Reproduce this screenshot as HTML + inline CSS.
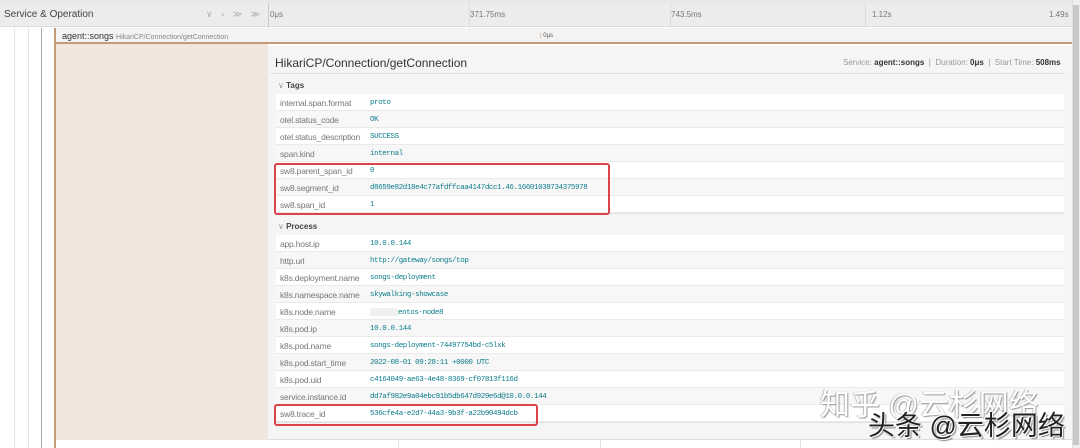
<!DOCTYPE html>
<html><head><meta charset="utf-8"><style>
*{margin:0;padding:0;box-sizing:border-box}
body{width:1080px;height:448px;overflow:hidden;background:#fff;font-family:"Liberation Sans",sans-serif;position:relative;color:#333}
.a{position:absolute}
.k{position:absolute;left:280px;font-size:8.5px;color:#777;letter-spacing:-0.2px}
.v{position:absolute;left:370px;font-family:"Liberation Mono",monospace;font-size:7.5px;letter-spacing:-0.4px;color:#0b7c8a}
.row{position:absolute;left:276px;width:788px;height:17px;border-bottom:1px solid #eaeaea}
</style></head><body>
<div class="a" style="left:0;top:0;width:1080px;height:3px;background:#e8e8e8"></div>
<div class="a" style="left:0;top:3px;width:1072px;height:24px;background:#ececec;border-bottom:1px solid #ddd"></div>
<div class="a" style="left:4px;top:9px;font-size:10px;color:#444">Service &amp; Operation</div>
<div class="a" style="left:206px;top:9px;font-size:9px;color:#aaa;letter-spacing:3px">∨ › ≫ ≫</div>
<div class="a" style="left:268px;top:3px;width:1px;height:41px;background:#ccc"></div>
<div class="a" style="left:270px;top:10px;font-size:8px;color:#777">0μs</div>
<div class="a" style="left:469px;top:3px;width:1px;height:41px;background:#ddd"></div>
<div class="a" style="left:470px;top:10px;font-size:8px;color:#777">371.75ms</div>
<div class="a" style="left:670px;top:3px;width:1px;height:41px;background:#ddd"></div>
<div class="a" style="left:671px;top:10px;font-size:8px;color:#777">743.5ms</div>
<div class="a" style="left:865px;top:3px;width:1px;height:41px;background:#ddd"></div>
<div class="a" style="left:872px;top:10px;font-size:8px;color:#777">1.12s</div>
<div class="a" style="left:1049px;top:10px;font-size:8px;color:#777">1.49s</div>
<div class="a" style="left:1072px;top:0;width:8px;height:448px;background:#f0f0f0;border-left:1px solid #ddd"></div>
<div class="a" style="left:1073px;top:5px;width:6px;height:440px;background:#c8c8c8"></div>
<div class="a" style="left:56px;top:28px;width:1016px;height:16px;background:#f3f3f3;border-bottom:2px solid #c49a77"></div>
<div class="a" style="left:62px;top:31px;font-size:9px;color:#333">agent::songs <span style="font-size:7px;color:#888">HikariCP/Connection/getConnection</span></div>
<div class="a" style="left:540px;top:33px;font-size:6px;color:#555"><span style="color:#c49a77">|</span> 0μs</div>
<div class="a" style="left:14px;top:28px;width:1px;height:420px;background:#e3e3e3"></div>
<div class="a" style="left:28px;top:28px;width:1px;height:420px;background:#e3e3e3"></div>
<div class="a" style="left:41px;top:28px;width:1px;height:420px;background:#aaa"></div>
<div class="a" style="left:54px;top:28px;width:2px;height:420px;background:#c49a77"></div>
<div class="a" style="left:56px;top:44px;width:212px;height:396px;background:#f0e6de"></div>
<div class="a" style="left:268px;top:46px;width:804px;height:394px;background:#f5f5f5;border-bottom:1px solid #ddd"></div>
<div class="a" style="left:275px;top:56px;font-size:12px;color:#333">HikariCP/Connection/getConnection</div>
<div class="a" style="left:843px;top:58px;font-size:8px;color:#999">Service: <b style="color:#333">agent::songs</b> &nbsp;|&nbsp; Duration: <b style="color:#333">0μs</b> &nbsp;|&nbsp; Start Time: <b style="color:#333">508ms</b></div>
<div class="a" style="left:270px;top:73px;width:795px;height:1px;background:#e2e2e2"></div>
<div class="a" style="left:278px;top:81px;font-size:8px;color:#444"><span style="color:#999">∨</span> <b>Tags</b></div>
<div class="a" style="left:276px;top:94px;width:788px;height:120px;background:#fff;border:1px solid #e2e2e2"></div>
<div class="row" style="top:94px;background:#fff"></div>
<div class="row" style="top:111px;background:#f7f7f7"></div>
<div class="row" style="top:128px;background:#fff"></div>
<div class="row" style="top:145px;background:#f7f7f7"></div>
<div class="row" style="top:162px;background:#fff"></div>
<div class="row" style="top:179px;background:#f7f7f7"></div>
<div class="row" style="top:196px;background:#fff"></div>
<div class="k" style="top:98px">internal.span.format</div><div class="v" style="top:99px">proto</div>
<div class="k" style="top:115px">otel.status_code</div><div class="v" style="top:116px">OK</div>
<div class="k" style="top:132px">otel.status_description</div><div class="v" style="top:133px">SUCCESS</div>
<div class="k" style="top:149px">span.kind</div><div class="v" style="top:150px">internal</div>
<div class="k" style="top:166px">sw8.parent_span_id</div><div class="v" style="top:167px">0</div>
<div class="k" style="top:183px">sw8.segment_id</div><div class="v" style="top:184px">d8659e82d18e4c77afdffcaa4147dcc1.46.16601038734375978</div>
<div class="k" style="top:200px">sw8.span_id</div><div class="v" style="top:201px">1</div>
<div class="a" style="left:274px;top:163px;width:336px;height:52px;border:2px solid #d9434a;border-radius:3px"></div>
<div class="a" style="left:278px;top:222px;font-size:8px;color:#444"><span style="color:#999">∨</span> <b>Process</b></div>
<div class="a" style="left:276px;top:235px;width:788px;height:188px;background:#fff;border:1px solid #e2e2e2"></div>
<div class="row" style="top:235px;background:#fff"></div>
<div class="row" style="top:252px;background:#f7f7f7"></div>
<div class="row" style="top:269px;background:#fff"></div>
<div class="row" style="top:286px;background:#f7f7f7"></div>
<div class="row" style="top:303px;background:#fff"></div>
<div class="row" style="top:320px;background:#f7f7f7"></div>
<div class="row" style="top:337px;background:#fff"></div>
<div class="row" style="top:354px;background:#f7f7f7"></div>
<div class="row" style="top:371px;background:#fff"></div>
<div class="row" style="top:388px;background:#f7f7f7"></div>
<div class="row" style="top:405px;background:#fff"></div>
<div class="k" style="top:239px">app.host.ip</div><div class="v" style="top:240px">10.0.0.144</div>
<div class="k" style="top:256px">http.url</div><div class="v" style="top:257px">http://gateway/songs/top</div>
<div class="k" style="top:273px">k8s.deployment.name</div><div class="v" style="top:274px">songs-deployment</div>
<div class="k" style="top:290px">k8s.namespace.name</div><div class="v" style="top:291px">skywalking-showcase</div>
<div class="k" style="top:307px">k8s.node.name</div><div class="v" style="top:308px"><span style="display:inline-block;width:28px;height:8px;background:#f0f0f0;vertical-align:middle"></span>entos-node8</div>
<div class="k" style="top:324px">k8s.pod.ip</div><div class="v" style="top:325px">10.0.0.144</div>
<div class="k" style="top:341px">k8s.pod.name</div><div class="v" style="top:342px">songs-deployment-74497754bd-c5lxk</div>
<div class="k" style="top:358px">k8s.pod.start_time</div><div class="v" style="top:359px">2022-08-01 09:28:11 +0000 UTC</div>
<div class="k" style="top:375px">k8s.pod.uid</div><div class="v" style="top:376px">c4164049-ae63-4e48-8369-cf07813f116d</div>
<div class="k" style="top:392px">service.instance.id</div><div class="v" style="top:393px">dd7af982e9a04ebc91b5db647d929e6d@10.0.0.144</div>
<div class="k" style="top:409px">sw8.trace_id</div><div class="v" style="top:410px">536cfe4a-e2d7-44a3-9b3f-a22b90494dcb</div>
<div class="a" style="left:274px;top:404px;width:264px;height:22px;border:2px solid #d9434a;border-radius:3px"></div>
<div class="a" style="left:268px;top:440px;width:804px;height:8px;background:#fff"></div>
<div class="a" style="left:398px;top:440px;width:1px;height:8px;background:#e3e3e3"></div>
<div class="a" style="left:600px;top:440px;width:1px;height:8px;background:#e3e3e3"></div>
<div class="a" style="left:800px;top:440px;width:1px;height:8px;background:#e3e3e3"></div>
<div class="a" style="left:820px;top:380px;font-size:30px;color:#fff;font-family:'Liberation Sans','Noto Sans CJK SC',sans-serif;text-shadow:1px 1px 1px #999,-1px 0 1px #bbb;white-space:nowrap">知乎 @云杉网络</div>
<div class="a" style="left:868px;top:404px;font-size:27px;color:#222;font-family:'Liberation Sans','Noto Sans CJK SC',sans-serif;text-shadow:-1px -1px 0 #fff,1px 1px 0 #fff,2px 2px 1px #888;white-space:nowrap">头条 @云杉网络</div>
</body></html>
